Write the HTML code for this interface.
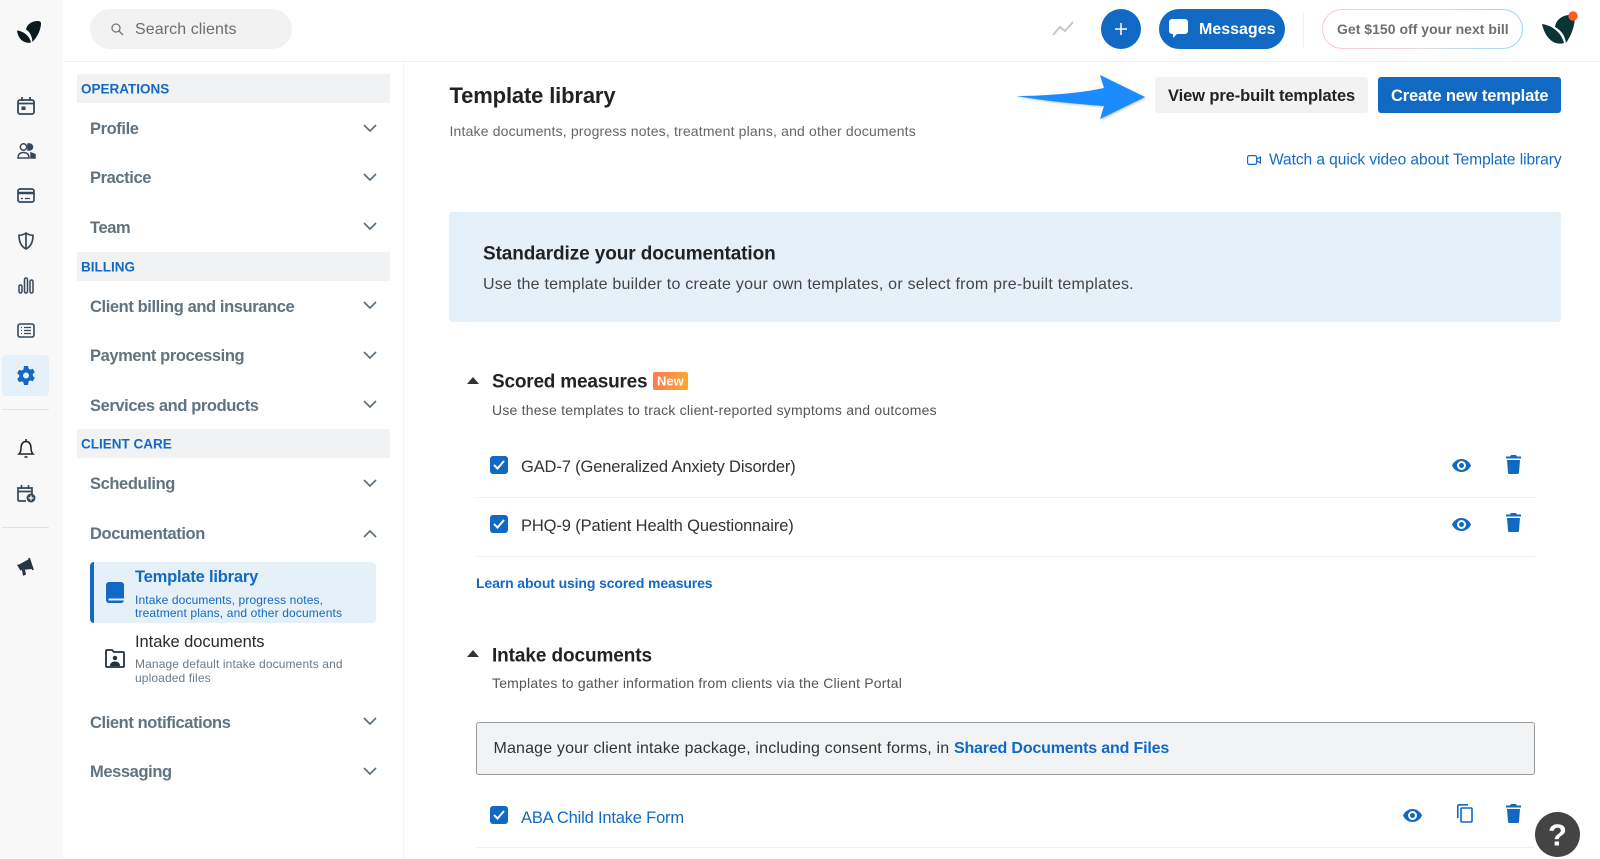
<!DOCTYPE html>
<html lang="en"><head><meta charset="utf-8"><title>Template library</title>
<style>
*{box-sizing:border-box}
html,body{margin:0;padding:0;width:1600px;height:859px;overflow:hidden;background:#fff;font-family:"Liberation Sans",sans-serif}
.b{position:absolute}
.t{position:absolute;white-space:nowrap;line-height:1;transform:translateY(-50%)}
.sec{position:absolute;left:77px;width:313px;height:29px;background:#f1f2f4}
.sl{font-size:13.5px;font-weight:700;color:#1469c5;left:81px}
.nav{font-size:16.5px;font-weight:700;color:#61737f;left:90px;letter-spacing:-.4px;margin-top:.5px}
.chev{position:absolute;left:362.500px;width:14px;height:9px}
.ic{position:absolute;overflow:visible}
.hr{position:absolute;left:476px;width:1059px;height:1px;background:#efefef}
.cb{position:absolute;left:490px;width:18px;height:18px;border-radius:3px;background:#1269c4}
.row{font-size:16.5px;color:#333;left:521px}
.desc{font-size:14px;color:#555;letter-spacing:.22px}
.h2{font-size:19px;font-weight:700;color:#222}
</style></head><body>
<!-- rail -->
<div class="b" style="left:0;top:0;width:63px;height:858px;background:#f8f8f8"></div>
<svg class="ic" style="left:17px;top:21px" width="24" height="22" viewBox="0 0 24 22"><path d="M9 8.500C10 3 15 0 21 0Q24.500 0 24 3.500C23 11 20 16 15.500 21C15 15 13 11 9 8.500Z" fill="#0c1a20"/><path d="M0 9.500C6 10 12.500 14.500 14 21.500C7 23 1 18 0 9.500Z" fill="#0c1a20"/></svg>
<svg class="ic" style="left:17px;top:97px" width="18" height="18" viewBox="0 0 18 18" fill="none" stroke="#35495a" stroke-width="1.8"><rect x="1" y="3" width="16" height="14" rx="2"/><path d="M1 6.500h16M5 0v4M13 0v4"/><rect x="4.500" y="9.500" width="4" height="3.500" fill="#35495a" stroke="none"/></svg>
<svg class="ic" style="left:17px;top:143px" width="19" height="16" viewBox="0 0 19 16" fill="none" stroke="#35495a" stroke-width="1.500"><circle cx="6.500" cy="4" r="3.200"/><path d="M1 15c0-4 2.500-5.500 5.500-5.500S12 11 12 15z"/><path d="M11 1h1.500a3 3 0 010 6H11z" fill="#35495a"/><path d="M14 10l4 1.500V15h-4z" fill="#35495a"/></svg>
<svg class="ic" style="left:17px;top:188px" width="18" height="15" viewBox="0 0 18 15" fill="none" stroke="#35495a" stroke-width="1.700"><rect x="1" y="1" width="16" height="13" rx="2"/><path d="M1 5h16" stroke-width="2.500"/><path d="M4 10.500h2M8 10.500h5" stroke-width="1.200"/></svg>
<svg class="ic" style="left:18px;top:232px" width="16" height="18" viewBox="0 0 16 18" fill="none" stroke="#35495a" stroke-width="1.700"><path d="M8 1c2 1.500 4.500 2.200 7 2.300C15 10 13 14.500 8 17 3 14.500 1 10 1 3.300 3.500 3.200 6 2.500 8 1z"/><path d="M8 1v16"/></svg>
<svg class="ic" style="left:18px;top:277px" width="16" height="17" viewBox="0 0 16 17" fill="none" stroke="#35495a" stroke-width="1.500"><rect x="1" y="8" width="3" height="8" rx="1.500"/><rect x="6.500" y="1" width="3" height="15" rx="1.500"/><rect x="12" y="3" width="3" height="13" rx="1.500"/></svg>
<svg class="ic" style="left:17px;top:323px" width="18" height="15" viewBox="0 0 18 15" fill="none" stroke="#35495a" stroke-width="1.600"><rect x="1" y="1" width="16" height="13" rx="2"/><path d="M4 4.500h1M7 4.500h7M4 7.500h1M7 7.500h7M4 10.500h1M7 10.500h7" stroke-width="1.300"/></svg>
<div class="b" style="left:2px;top:355px;width:47px;height:41px;background:#e6f0f9;border-radius:4px"></div>
<svg class="ic" style="left:17px;top:366px" width="18" height="19" viewBox="0 0 18 19"><path fill-rule="evenodd" fill="#1269c4" d="M7 0h4l.6 2.600 1.700 1 2.500-.8 2 3.400-2 1.800v2l2 1.800-2 3.400-2.500-.8-1.700 1L11 19H7l-.6-2.600-1.700-1-2.500.8-2-3.400 2-1.800v-2l-2-1.800 2-3.400 2.500.8 1.700-1zM9 6.500a3 3 0 100 6 3 3 0 000-6z"/></svg>
<div class="b" style="left:2px;top:409px;width:47px;height:1px;background:#e2e2e2"></div>
<svg class="ic" style="left:18px;top:439px" width="16" height="19" viewBox="0 0 16 19" fill="none" stroke="#222" stroke-width="1.500"><path d="M1 15c1.500-1.500 2-3 2-6 0-4 2-6.500 5-6.500s5 2.500 5 6.500c0 3 .5 4.500 2 6z"/><path d="M8 0v2.500M6.500 18h3"/></svg>
<svg class="ic" style="left:17px;top:485px" width="19" height="18" viewBox="0 0 19 18" fill="none" stroke="#35495a" stroke-width="1.700"><path d="M9 16H2a1 1 0 01-1-1V3h14v6M1 6.500h14M4.500 0v4M11.500 0v4"/><circle cx="14" cy="13" r="4.500" fill="#35495a" stroke="none"/><path d="M14 10.500v5M11.500 13h5" stroke="#fff" stroke-width="1.200"/></svg>
<div class="b" style="left:2px;top:527px;width:47px;height:1px;background:#e2e2e2"></div>
<svg class="ic" style="left:17px;top:557px" width="18" height="20" viewBox="0 0 18 20"><path d="M0 8l3-1 2 6-1.500.6zM3 7l9-5 3 10-10 1z" fill="#26353f"/><path d="M12 1l4 12" stroke="#26353f" stroke-width="1.800"/><path d="M5 13l3-.3 1 5-3 1z" fill="#26353f"/></svg>

<!-- top bar -->
<div class="b" style="left:63px;top:61px;width:1537px;height:1px;background:#efefef"></div>
<div class="b" style="left:90px;top:9px;width:202px;height:40px;border-radius:20px;background:#f2f2f2"></div>
<svg class="ic" style="left:111px;top:23px" width="13" height="13" viewBox="0 0 13 13" fill="none" stroke="#777" stroke-width="1.300"><circle cx="5" cy="5" r="4"/><path d="M8 8l4 4"/></svg>
<span class="t" style="left:135px;top:30px;font-size:16px;color:#6d6d6d;letter-spacing:.08px">Search clients</span>
<svg class="ic" style="left:1052px;top:21px" width="22" height="15" viewBox="0 0 22 15" fill="none" stroke="#c8c8c8" stroke-width="2"><path d="M1 14L8 6l5 4 8-9"/></svg>
<div class="b" style="left:1101px;top:9px;width:40px;height:40px;border-radius:50%;background:#1269c4"></div>
<svg class="ic" style="left:1115px;top:23px" width="12" height="12" viewBox="0 0 12 12" stroke="#fff" stroke-width="1.500"><path d="M6 0v12M0 6h12"/></svg>
<div class="b" style="left:1159px;top:9px;width:126px;height:40px;border-radius:20px;background:#1269c4"></div>
<svg class="ic" style="left:1169px;top:19px" width="19" height="20" viewBox="0 0 19 20"><path d="M3 0h13a3 3 0 013 3v9a3 3 0 01-3 3H8l-4 4v-4H3a3 3 0 01-3-3V3a3 3 0 013-3z" fill="#fff"/></svg>
<span class="t" style="left:1199px;top:30px;font-size:16px;font-weight:700;color:#fff">Messages</span>
<div class="b" style="left:1303px;top:12px;width:1px;height:35px;background:#efefef"></div>
<div class="b" style="left:1322px;top:9px;width:201px;height:40px;border-radius:20px;background:linear-gradient(90deg,#fbc9c9,#e6dbe2 50%,#8fdcf3)"></div>
<div class="b" style="left:1323px;top:10px;width:199px;height:38px;border-radius:19px;background:#fff"></div>
<span class="t" style="left:1337px;top:29px;font-size:14px;font-weight:700;color:#6f6f6f;letter-spacing:.02px">Get $150 off your next bill</span>
<svg class="ic" style="left:1542px;top:11px" width="36" height="33" viewBox="0 0 36 33"><path d="M13 16C14 9 20 4 28 4L33 5C33 15 29 25 24 32C23 25 20 20 13 16Z" fill="#0d3434"/><path d="M0 13C8 14 19 20 22 32C12 35 3 27 0 13Z" fill="#0d3434"/><circle cx="31" cy="5" r="4.700" fill="#ff5a26"/></svg>

<!-- sidebar -->
<div class="b" style="left:403px;top:62px;width:1px;height:797px;background:#f4f4f4"></div>
<div class="sec" style="top:74px"></div><span class="t sl" style="top:89px">OPERATIONS</span>
<span class="t nav" style="top:128px">Profile</span>
<span class="t nav" style="top:177.500px">Practice</span>
<span class="t nav" style="top:227px">Team</span>
<div class="sec" style="top:252px"></div><span class="t sl" style="top:266.500px">BILLING</span>
<span class="t nav" style="top:306px">Client billing and insurance</span>
<span class="t nav" style="top:355px">Payment processing</span>
<span class="t nav" style="top:405px">Services and products</span>
<div class="sec" style="top:429px"></div><span class="t sl" style="top:444px">CLIENT CARE</span>
<span class="t nav" style="top:483.500px">Scheduling</span>
<span class="t nav" style="top:533px">Documentation</span>
<span class="t nav" style="top:722px">Client notifications</span>
<span class="t nav" style="top:771px">Messaging</span>
<svg class="chev" style="top:124px" viewBox="0 0 14 9" fill="none" stroke="#5d7080" stroke-width="1.700"><path d="M1 1l6 6 6-6"/></svg>
<svg class="chev" style="top:173px" viewBox="0 0 14 9" fill="none" stroke="#5d7080" stroke-width="1.700"><path d="M1 1l6 6 6-6"/></svg>
<svg class="chev" style="top:222px" viewBox="0 0 14 9" fill="none" stroke="#5d7080" stroke-width="1.700"><path d="M1 1l6 6 6-6"/></svg>
<svg class="chev" style="top:301px" viewBox="0 0 14 9" fill="none" stroke="#5d7080" stroke-width="1.700"><path d="M1 1l6 6 6-6"/></svg>
<svg class="chev" style="top:351px" viewBox="0 0 14 9" fill="none" stroke="#5d7080" stroke-width="1.700"><path d="M1 1l6 6 6-6"/></svg>
<svg class="chev" style="top:400px" viewBox="0 0 14 9" fill="none" stroke="#5d7080" stroke-width="1.700"><path d="M1 1l6 6 6-6"/></svg>
<svg class="chev" style="top:479px" viewBox="0 0 14 9" fill="none" stroke="#5d7080" stroke-width="1.700"><path d="M1 1l6 6 6-6"/></svg>
<svg class="chev" style="top:529px" viewBox="0 0 14 9" fill="none" stroke="#5d7080" stroke-width="1.700"><path d="M1 8l6-6 6 6"/></svg>
<svg class="chev" style="top:717px" viewBox="0 0 14 9" fill="none" stroke="#5d7080" stroke-width="1.700"><path d="M1 1l6 6 6-6"/></svg>
<svg class="chev" style="top:767px" viewBox="0 0 14 9" fill="none" stroke="#5d7080" stroke-width="1.700"><path d="M1 1l6 6 6-6"/></svg>

<div class="b" style="left:90px;top:562px;width:286px;height:61px;background:#e6f0f9;border-left:4px solid #1269c4;border-radius:4px"></div>
<svg class="ic" style="left:106px;top:582px" width="18" height="21" viewBox="0 0 18 21"><rect width="18" height="21" rx="3" fill="#1269c4"/><rect x="2.500" y="16.500" width="15.500" height="2" fill="#e6f0f9"/></svg>
<span class="t" style="left:135px;top:577px;font-size:16.500px;font-weight:700;color:#1269c4;letter-spacing:-.2px">Template library</span>
<span class="t" style="left:135px;top:599.500px;font-size:12px;color:#1469c5;letter-spacing:.12px">Intake documents, progress notes,</span>
<span class="t" style="left:135px;top:613px;font-size:12px;color:#1469c5;letter-spacing:.14px">treatment plans, and other documents</span>
<svg class="ic" style="left:105px;top:649px" width="20" height="19" viewBox="0 0 20 19" fill="none" stroke="#22303a" stroke-width="1.800"><path d="M1 2a1 1 0 011-1h5l2 2h9a1 1 0 011 1v13a1 1 0 01-1 1H2a1 1 0 01-1-1z"/><circle cx="10" cy="9" r="2.200" fill="#22303a" stroke="none"/><path d="M5 17c0-3 2-4.500 5-4.500s5 1.500 5 4.500z" fill="#22303a" stroke="none"/></svg>
<span class="t" style="left:135px;top:642px;font-size:16.500px;color:#2a2a2a;letter-spacing:-.05px">Intake documents</span>
<span class="t" style="left:135px;top:664px;font-size:12px;color:#6b7b88;letter-spacing:.12px">Manage default intake documents and</span>
<span class="t" style="left:135px;top:678px;font-size:12px;color:#6b7b88;letter-spacing:.12px">uploaded files</span>

<!-- header -->
<span class="t" style="left:449.500px;top:96px;font-size:22px;font-weight:700;color:#222;letter-spacing:-.15px">Template library</span>
<span class="t" style="left:449.500px;top:131px;font-size:14px;color:#666;letter-spacing:.17px">Intake documents, progress notes, treatment plans, and other documents</span>
<svg class="ic" style="left:1016px;top:75px;filter:drop-shadow(1px 1px 1px rgba(0,0,0,.25))" width="130" height="45" viewBox="0 0 130 45"><path d="M0 21C30 21 65 18 88 13L84 0 129 22 84 44 88 31C60 29 30 26 0 21Z" fill="#1a8cff"/></svg>
<div class="b" style="left:1155px;top:77px;width:213px;height:36px;background:#f2f2f2;border-radius:3px"></div>
<span class="t" style="left:1168px;top:95.500px;font-size:16.500px;font-weight:700;color:#222;letter-spacing:-.1px">View pre-built templates</span>
<div class="b" style="left:1378px;top:77px;width:183px;height:36px;background:#1269c4;border-radius:3px"></div>
<span class="t" style="left:1391px;top:95.500px;font-size:16.500px;font-weight:700;color:#fff;letter-spacing:-.16px">Create new template</span>
<svg class="ic" style="left:1247px;top:155px" width="14" height="10" viewBox="0 0 14 10" fill="none" stroke="#1469c5" stroke-width="1.200"><rect x=".6" y=".6" width="9" height="8.800" rx="1.500"/><path d="M10 4l3.400-2v6L10 6"/></svg>
<span class="t" style="left:1269px;top:160px;font-size:15.500px;color:#1469c5;letter-spacing:-.05px">Watch a quick video about Template library</span>

<!-- banner -->
<div class="b" style="left:449px;top:212px;width:1112px;height:110px;background:#e6f0f9;border-radius:3px"></div>
<span class="t h2" style="left:483px;top:254px;letter-spacing:-.1px">Standardize your documentation</span>
<span class="t" style="left:483px;top:285px;font-size:16px;color:#444;letter-spacing:.236px">Use the template builder to create your own templates, or select from pre-built templates.</span>

<!-- scored -->
<svg class="ic" style="left:467px;top:377px" width="12" height="7" viewBox="0 0 12 7"><path d="M6 0l6 7H0z" fill="#333"/></svg>
<span class="t h2" style="left:492px;top:382px;letter-spacing:-.2px">Scored measures</span>
<div class="b" style="left:653px;top:372px;width:35px;height:18px;border-radius:2px;background:linear-gradient(90deg,#ff7a50,#ffa530)"></div>
<span class="t" style="left:657px;top:381px;font-size:13px;font-weight:700;color:#fff">New</span>
<span class="t desc" style="left:492px;top:410px">Use these templates to track client-reported symptoms and outcomes</span>
<div class="cb" style="top:456px"></div>
<svg class="ic" style="left:493px;top:460px" width="12" height="10" viewBox="0 0 12 10" fill="none" stroke="#fff" stroke-width="2"><path d="M1 5l3.500 3.500L11 1"/></svg>
<span class="t row" style="top:467px;letter-spacing:-.14px">GAD-7 (Generalized Anxiety Disorder)</span>
<div class="hr" style="top:497px"></div>
<div class="cb" style="top:515px"></div>
<svg class="ic" style="left:493px;top:519px" width="12" height="10" viewBox="0 0 12 10" fill="none" stroke="#fff" stroke-width="2"><path d="M1 5l3.500 3.500L11 1"/></svg>
<span class="t row" style="top:526px;letter-spacing:-.12px">PHQ-9 (Patient Health Questionnaire)</span>
<div class="hr" style="top:556px"></div>
<span class="t" style="left:476px;top:583px;font-size:14px;font-weight:700;color:#1469c5;letter-spacing:-.12px">Learn about using scored measures</span>

<svg class="ic" style="left:1452px;top:459px" width="19" height="13" viewBox="0 0 19 13"><path fill-rule="evenodd" fill="#1269c4" d="M9.500 0C14 0 17.500 3 19 6.500 17.500 10 14 13 9.500 13S1.500 10 0 6.500C1.500 3 5 0 9.500 0zm0 2a4.500 4.500 0 100 9 4.500 4.500 0 000-9zm0 2a2.500 2.500 0 110 5 2.500 2.500 0 010-5z"/></svg>
<svg class="ic" style="left:1506px;top:455px" width="15" height="19" viewBox="0 0 15 19"><path d="M5 0h5l1 1.500h4V3.500H0V1.500h4zM1 5h13l-1 12.500a1.500 1.500 0 01-1.500 1.500h-8A1.500 1.500 0 012 17.500z" fill="#1269c4"/></svg>
<svg class="ic" style="left:1452px;top:518px" width="19" height="13" viewBox="0 0 19 13"><path fill-rule="evenodd" fill="#1269c4" d="M9.500 0C14 0 17.500 3 19 6.500 17.500 10 14 13 9.500 13S1.500 10 0 6.500C1.500 3 5 0 9.500 0zm0 2a4.500 4.500 0 100 9 4.500 4.500 0 000-9zm0 2a2.500 2.500 0 110 5 2.500 2.500 0 010-5z"/></svg>
<svg class="ic" style="left:1506px;top:513px" width="15" height="19" viewBox="0 0 15 19"><path d="M5 0h5l1 1.500h4V3.500H0V1.500h4zM1 5h13l-1 12.500a1.500 1.500 0 01-1.500 1.500h-8A1.500 1.500 0 012 17.500z" fill="#1269c4"/></svg>

<!-- intake -->
<svg class="ic" style="left:467px;top:650px" width="12" height="7" viewBox="0 0 12 7"><path d="M6 0l6 7H0z" fill="#333"/></svg>
<span class="t h2" style="left:492px;top:655.500px;letter-spacing:-.1px">Intake documents</span>
<span class="t desc" style="left:492px;top:683px;letter-spacing:.2px">Templates to gather information from clients via the Client Portal</span>
<div class="b" style="left:476px;top:722px;width:1059px;height:53px;background:#f2f3f4;border:1px solid #9a9a9a;border-radius:3px"></div>
<span class="t" style="left:493.500px;top:749px;font-size:16px;color:#333;letter-spacing:.165px">Manage your client intake package, including consent forms, in <b style="color:#1269c4;letter-spacing:-.17px">Shared Documents and Files</b></span>
<div class="cb" style="top:806px"></div>
<svg class="ic" style="left:493px;top:810px" width="12" height="10" viewBox="0 0 12 10" fill="none" stroke="#fff" stroke-width="2"><path d="M1 5l3.500 3.500L11 1"/></svg>
<span class="t row" style="top:818px;color:#1269c4;letter-spacing:-.19px">ABA Child Intake Form</span>
<div class="hr" style="top:847px"></div>
<svg class="ic" style="left:1403px;top:809px" width="19" height="13" viewBox="0 0 19 13"><path fill-rule="evenodd" fill="#1269c4" d="M9.500 0C14 0 17.500 3 19 6.500 17.500 10 14 13 9.500 13S1.500 10 0 6.500C1.500 3 5 0 9.500 0zm0 2a4.500 4.500 0 100 9 4.500 4.500 0 000-9zm0 2a2.500 2.500 0 110 5 2.500 2.500 0 010-5z"/></svg>
<svg class="ic" style="left:1457px;top:804px" width="16" height="19" viewBox="0 0 16 19" fill="none" stroke="#1269c4" stroke-width="1.600"><path d="M11 .8H2A1.200 1.200 0 00.8 2v12"/><rect x="4" y="4" width="11" height="14" rx="1"/></svg>
<svg class="ic" style="left:1506px;top:804px" width="15" height="19" viewBox="0 0 15 19"><path d="M5 0h5l1 1.500h4V3.500H0V1.500h4zM1 5h13l-1 12.500a1.500 1.500 0 01-1.500 1.500h-8A1.500 1.500 0 012 17.500z" fill="#1269c4"/></svg>
<div class="b" style="left:1535px;top:812px;width:45px;height:45px;border-radius:50%;background:#444"></div>
<span class="t" style="left:1535px;width:45px;text-align:center;top:835px;font-size:31px;font-weight:700;color:#fff">?</span>
</body></html>
